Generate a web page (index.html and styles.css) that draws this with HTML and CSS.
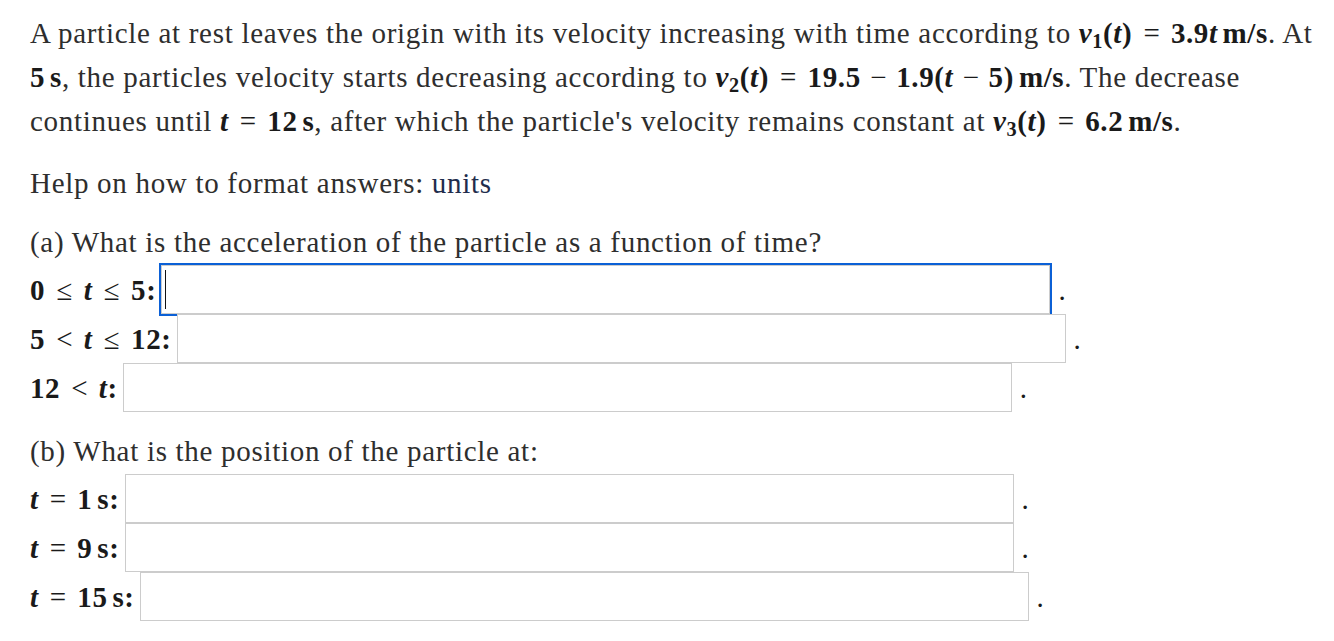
FILE: index.html
```html
<!DOCTYPE html>
<html lang="en">
<head>
<meta charset="utf-8">
<title>Particle velocity problem</title>
<link rel="stylesheet" href="styles.css">
</head>
<body>
<main class="page">
  <p class="problem">A particle at rest leaves the origin with its velocity increasing with time according to <span class="m"><span class="bi">v</span><sub class="sub">1</sub><span class="b">(</span><span class="bi">t</span><span class="b">)</span><span class="rel">=</span><span class="b">3.9</span><span class="bi">t</span><span class="thin"></span><span class="b">m/s</span></span>. At<br><span class="m"><span class="b">5</span><span class="thin"></span><span class="b">s</span></span>, the particles velocity starts decreasing according to <span class="m"><span class="bi">v</span><sub class="sub">2</sub><span class="b">(</span><span class="bi">t</span><span class="b">)</span><span class="rel">=</span><span class="b">19.5</span><span class="bin">−</span><span class="b">1.9(</span><span class="bi">t</span><span class="bin">−</span><span class="b">5)</span><span class="thin"></span><span class="b">m/s</span></span>. The decrease<br>continues until <span class="m"><span class="bi">t</span><span class="rel">=</span><span class="b">12</span><span class="thin"></span><span class="b">s</span></span>, after which the particle's velocity remains constant at <span class="m"><span class="bi">v</span><sub class="sub">3</sub><span class="b">(</span><span class="bi">t</span><span class="b">)</span><span class="rel">=</span><span class="b">6.2</span><span class="thin"></span><span class="b">m/s</span></span>.</p>

  <p class="help">Help on how to format answers: <a class="link" href="#">units</a></p>

  <section class="part">
    <h2 class="question">(a) What is the acceleration of the particle as a function of time?</h2>
    <div class="rows">
      <div class="row">
        <span class="label m"><span class="b">0</span><span class="rel">≤</span><span class="bi">t</span><span class="rel">≤</span><span class="b">5</span><span class="b">:</span></span>
        <span class="field focused"><input class="answer" type="text" aria-label="acceleration for 0 to 5 s"><span class="caret"></span></span>
        <span class="dot">.</span>
      </div>
      <div class="row">
        <span class="label m"><span class="b">5</span><span class="rel">&lt;</span><span class="bi">t</span><span class="rel">≤</span><span class="b">12</span><span class="b">:</span></span>
        <span class="field"><input class="answer" type="text" aria-label="acceleration for 5 to 12 s"></span>
        <span class="dot">.</span>
      </div>
      <div class="row">
        <span class="label m"><span class="b">12</span><span class="rel">&lt;</span><span class="bi">t</span><span class="b">:</span></span>
        <span class="field"><input class="answer" type="text" aria-label="acceleration after 12 s"></span>
        <span class="dot">.</span>
      </div>
    </div>
  </section>

  <section class="part part-b">
    <h2 class="question">(b) What is the position of the particle at:</h2>
    <div class="rows">
      <div class="row">
        <span class="label m"><span class="bi">t</span><span class="rel">=</span><span class="b">1</span><span class="thin"></span><span class="b">s:</span></span>
        <span class="field"><input class="answer" type="text" aria-label="position at 1 s"></span>
        <span class="dot">.</span>
      </div>
      <div class="row">
        <span class="label m"><span class="bi">t</span><span class="rel">=</span><span class="b">9</span><span class="thin"></span><span class="b">s:</span></span>
        <span class="field"><input class="answer" type="text" aria-label="position at 9 s"></span>
        <span class="dot">.</span>
      </div>
      <div class="row">
        <span class="label m"><span class="bi">t</span><span class="rel">=</span><span class="b">15</span><span class="thin"></span><span class="b">s:</span></span>
        <span class="field"><input class="answer" type="text" aria-label="position at 15 s"></span>
        <span class="dot">.</span>
      </div>
    </div>
  </section>
</main>
</body>
</html>
```
FILE: styles.css
```css
html, body {
  margin: 0;
  padding: 0;
  background: #ffffff;
}

.page {
  padding: 11px 0 0 30px;
  font-family: "Liberation Serif", "Times New Roman", serif;
  font-size: 29px;
  letter-spacing: 0.7px;
  line-height: 44px;
  color: #2e2e2e;
}

.problem,
.help {
  margin: 0;
  white-space: nowrap;
}

.help {
  margin-top: 18px;
}

.link {
  color: #1f2d4d;
  text-decoration: none;
}

.part {
  margin-top: 15px;
}

.part-b {
  margin-top: 17px;
}

.question {
  margin: 0;
  font-size: 29px;
  font-weight: normal;
  line-height: 44px;
}

/* math */
.m {
  font-size: 29px;
  letter-spacing: 0.6px;
  color: #1a1a1a;
  white-space: nowrap;
}

.b {
  font-weight: bold;
}

.bi {
  font-weight: bold;
  font-style: italic;
}

.sub {
  font-size: 0.7em;
  font-weight: bold;
  vertical-align: -0.25em;
  line-height: 0;
}

.rel {
  display: inline-block;
  width: 0.778em;
  margin: 0 0.278em;
  text-align: center;
  letter-spacing: 0;
}

.bin {
  display: inline-block;
  width: 0.778em;
  margin: 0 0.222em;
  text-align: center;
  letter-spacing: 0;
}

.thin {
  display: inline-block;
  width: 0.17em;
}

/* answer rows */
.rows {
  margin-top: 1px;
}

.row {
  display: flex;
  align-items: flex-start;
  height: 49px;
}

.label {
  line-height: 49px;
  padding-top: 1px;
  margin-right: 5px;
}

.field {
  position: relative;
  display: block;
}

.answer {
  display: block;
  box-sizing: border-box;
  width: 889px;
  height: 49px;
  margin: 0;
  padding: 0 8px;
  border: 1px solid #cccccc;
  border-radius: 0;
  background: #ffffff;
  font-family: "Liberation Serif", serif;
  font-size: 24px;
  outline: none;
}

.focused .answer {
  outline: 2px solid #0b60d6;
  outline-offset: 0;
}

.caret {
  position: absolute;
  left: 4px;
  top: 5px;
  width: 1px;
  height: 39px;
  background: #111111;
}

.dot {
  line-height: 49px;
  padding-top: 1px;
  margin-left: 8px;
  color: #1a1a1a;
}
```
